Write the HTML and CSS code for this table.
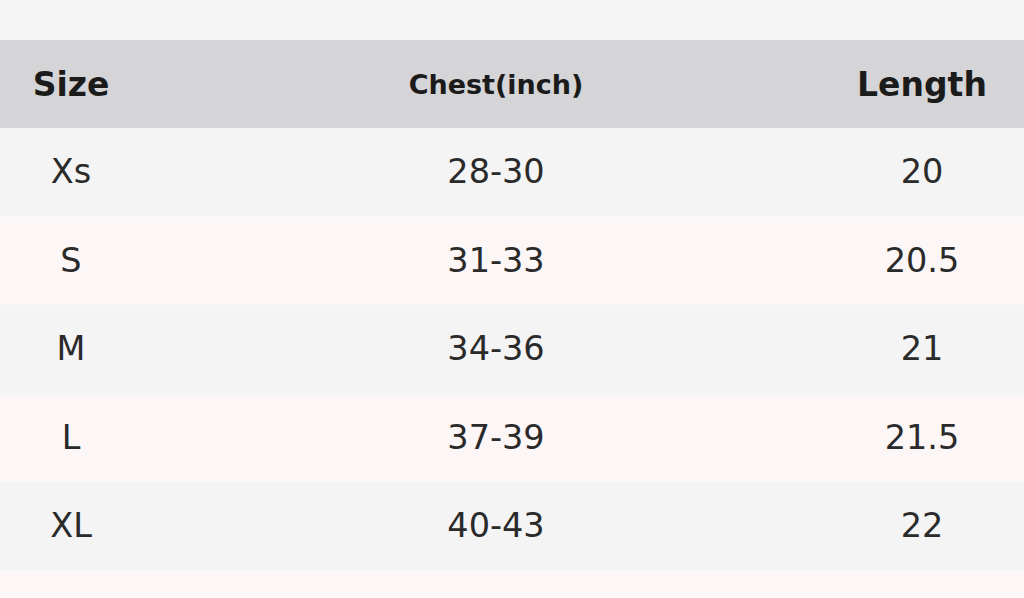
FILE: index.html
```html
<!DOCTYPE html>
<html>
<head>
<meta charset="utf-8">
<link rel="stylesheet" href="styles.css">
</head>
<body>
<div class="page">
  <div class="top"></div>
  <div class="table">
    <div class="row head">
      <div class="cell">Size</div>
      <div class="cell small">Chest(inch)</div>
      <div class="cell">Length</div>
    </div>
    <div class="row grey"><div class="cell">Xs</div><div class="cell">28-30</div><div class="cell">20</div></div>
    <div class="row pink"><div class="cell">S</div><div class="cell">31-33</div><div class="cell">20.5</div></div>
    <div class="row grey"><div class="cell">M</div><div class="cell">34-36</div><div class="cell">21</div></div>
    <div class="row pink"><div class="cell">L</div><div class="cell">37-39</div><div class="cell">21.5</div></div>
    <div class="row grey"><div class="cell">XL</div><div class="cell">40-43</div><div class="cell">22</div></div>
    <div class="row pink"><div class="cell"></div><div class="cell"></div><div class="cell"></div></div>
  </div>
</div>
</body>
</html>
```
FILE: styles.css
```css
html, body {
  margin: 0;
  padding: 0;
  background: #f5f5f5;
  overflow: hidden;
}
.page {
  width: 1024px;
  height: 598px;
  overflow: hidden;
  font-family: "DejaVu Sans", Verdana, sans-serif;
  color: #2a2a2a;
}
.top {
  height: 40px;
  background: #f5f5f5;
}
.table {
  display: flex;
  flex-direction: column;
}
.row {
  display: grid;
  grid-template-columns: 142px 708px 144px 30px;
  align-items: center;
  height: 88.5px;
  font-size: 33.5px;
}
.cell {
  text-align: center;
  white-space: nowrap;
}
.head {
  height: 88px;
  background: #d5d4d6;
  font-weight: bold;
  font-size: 33px;
  color: #1b1b1b;
}
.head .small {
  font-size: 27px;
}
.grey {
  background: #f4f4f4;
  border-bottom: 1px solid #f8f8f8;
  box-sizing: border-box;
}
.pink {
  background: #fcf7f6;
  border-bottom: 1px solid #f8f7f7;
  box-sizing: border-box;
}
```
